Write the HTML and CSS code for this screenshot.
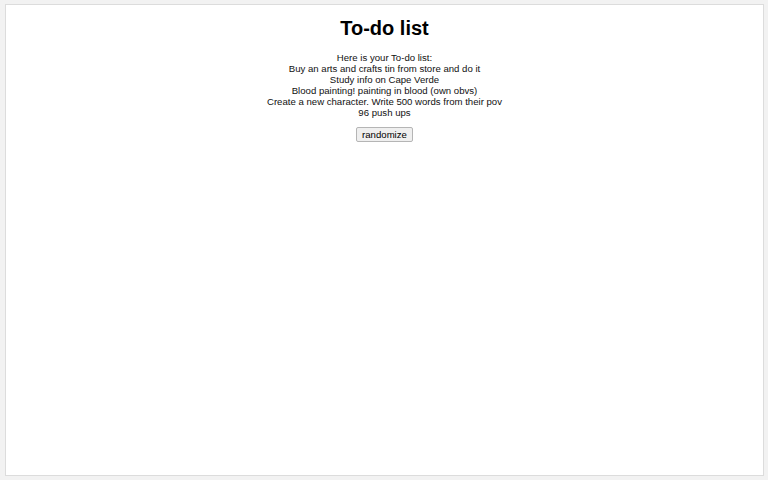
FILE: index.html
```html
<!DOCTYPE html>
<html>
<head>
<meta charset="utf-8">
<link rel="stylesheet" href="styles.css">
</head>
<body>
<div class="frame">
  <h1 class="title">To-do list</h1>
  <div class="list">
    <div>Here is your To-do list:</div>
    <div>Buy an arts and crafts tin from store and do it</div>
    <div>Study info on Cape Verde</div>
    <div>Blood painting! painting in blood (own obvs)</div>
    <div>Create a new character. Write 500 words from their pov</div>
    <div>96 push ups</div>
  </div>
  <button class="btn">randomize</button>
</div>
</body>
</html>
```
FILE: styles.css
```css
html, body {
  margin: 0;
  padding: 0;
  height: 100%;
}
body {
  background: #f2f2f2;
  padding: 4px 4px 4px 5px;
  box-sizing: border-box;
  font-family: "Liberation Sans", Arial, sans-serif;
  color: #000;
}
.frame {
  height: 100%;
  box-sizing: border-box;
  background: #fff;
  border: 1px solid #dcdcdc;
  display: flex;
  flex-direction: column;
  align-items: center;
}
.title {
  margin: 11px 0 0;
  font-size: 20px;
  line-height: 24px;
  font-weight: bold;
}
.list {
  margin-top: 12px;
  font-size: 9.6px;
  line-height: 11px;
  text-align: center;
  color: #111;
}
.btn {
  margin-top: 9px;
  font-family: "Liberation Sans", Arial, sans-serif;
  font-size: 9.6px;
  line-height: 13px;
  padding: 0 5px;
  background: #efefef;
  border: 1px solid #b5b5b5;
  border-radius: 2px;
  color: #000;
}
```
